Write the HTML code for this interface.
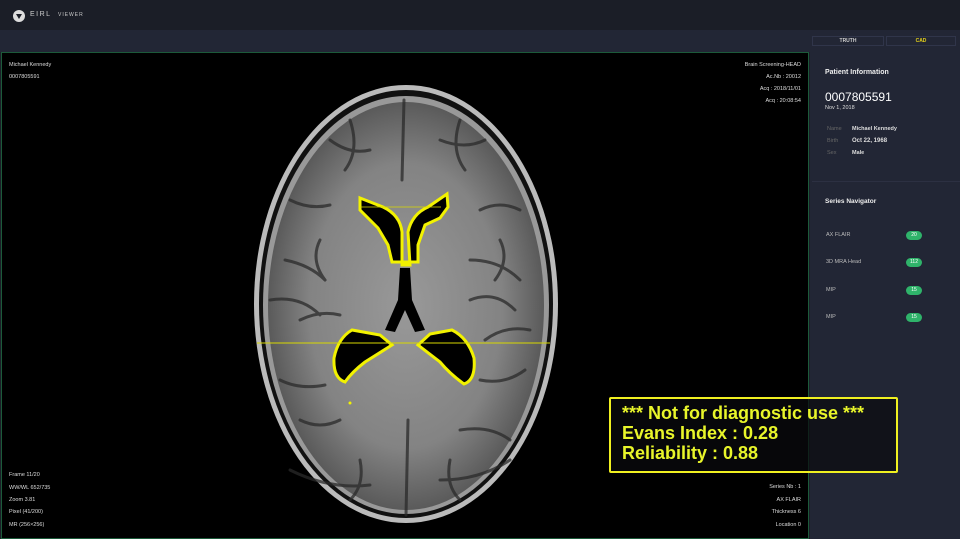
<!DOCTYPE html>
<html><head><meta charset="utf-8"><style>
*{margin:0;padding:0;box-sizing:border-box}
body{width:960px;height:539px;background:#1b1e27;font-family:"Liberation Sans",sans-serif;position:relative;overflow:hidden;color:#fff}
.top{position:absolute;left:0;top:0;width:960px;height:30px;background:#1b1e27}
.bar2{position:absolute;left:0;top:30px;width:960px;height:22px;background:#222635}
.view{position:absolute;left:1px;top:52px;width:808px;height:487px;background:#000;border:1.5px solid #1c5a3a}
.side{position:absolute;left:810px;top:52px;width:150px;height:487px;background:#222635}
.t{position:absolute;font-size:5.5px;color:#ddd;white-space:nowrap}
.r{text-align:right}
.tab{position:absolute;top:36px;height:10px;border:1px solid #30354a;font-size:5px;font-weight:bold;text-align:center;line-height:8px}
.badge{position:absolute;left:906px;width:16px;height:9px;border-radius:5px;background:#2fb36a;font-size:5px;text-align:center;line-height:9px;color:#fff}
.box{position:absolute;left:609px;top:397px;width:289px;height:76px;border:2px solid #f0f020;border-radius:2px;background:rgba(10,10,14,0.7);color:#e8f52a;font-weight:bold;font-size:18px;line-height:20px;padding:4px 0 0 11px}
</style></head><body>
<div class="top">
<svg style="position:absolute;left:12px;top:9px" width="14" height="14" viewBox="0 0 14 14"><circle cx="7" cy="7" r="6" fill="#ddd"/><path d="M4 5h6l-3 5z" fill="#1b1e27"/></svg>
<div class="t" style="left:30px;top:11px;font-size:7px;letter-spacing:1.5px;color:#ccc">EIRL</div>
<div class="t" style="left:58px;top:12px;font-size:5px;letter-spacing:1px;color:#ccc">VIEWER</div>
</div>
<div class="bar2"></div>
<div class="tab" style="left:812px;width:72px;color:#ccc">TRUTH</div>
<div class="tab" style="left:886px;width:70px;color:#e6d21a">CAD</div>
<div class="view"></div>
<div class="side"></div>
<svg style="position:absolute;left:0;top:0" width="960" height="539">
<defs>
<radialGradient id="g" cx="0.5" cy="0.5" r="0.5"><stop offset="0" stop-color="#999"/><stop offset="0.7" stop-color="#838383"/><stop offset="1" stop-color="#5a5a5a"/></radialGradient>
</defs>
<ellipse cx="406" cy="304" rx="152" ry="219" fill="#bbb"/>
<ellipse cx="406" cy="304" rx="147" ry="214" fill="#111"/>
<ellipse cx="406" cy="305" rx="143" ry="209" fill="#999"/>
<ellipse cx="406" cy="306" rx="138" ry="204" fill="url(#g)"/>
<g stroke="#2a2a2a" stroke-width="3" fill="none" opacity="0.75" stroke-linecap="round">
<path d="M404 100 L402 180"/><path d="M408 420 L406 515"/>
<path d="M290 200 q20 10 40 5 M285 260 q25 5 40 20 M300 320 q20 -10 40 -5 M480 210 q20 -10 40 0 M470 260 q30 0 50 20 M470 300 q25 -10 45 10 M300 420 q20 10 40 0 M460 430 q30 -5 50 10 M330 140 q20 15 40 10 M440 140 q25 10 45 0 M290 470 q40 20 80 15 M440 480 q40 0 70 -20"/>
<path d="M270 300 q30 -5 50 15 M530 330 q-25 -5 -45 10 M320 240 q-10 20 5 40 M500 240 q10 20 -5 40 M350 120 q10 30 -5 50 M460 120 q-10 30 5 50 M280 380 q20 10 45 5 M480 380 q25 5 45 -10 M360 460 q5 25 -10 40 M450 460 q-5 25 10 40"/>
</g>
<path d="M400 268 L410 268 L412 300 L425 330 L415 332 L405 310 L395 332 L385 330 L398 300 Z" fill="#000"/>
<path d="M360 198 L383 207 Q400 215 402 232 L402 265 L410 265 L408 232 Q412 214 428 207 L447 194 L448 207 L440 218 L425 225 L418 245 L418 262 L392 262 L388 245 L378 228 L360 210 Z" fill="#000" stroke="#f2f200" stroke-width="3"/>
<path d="M352 330 Q338 338 334 358 Q333 378 345 382 Q352 372 365 362 L392 345 L380 335 Z" fill="#000" stroke="#f2f200" stroke-width="3"/>
<path d="M452 330 Q468 338 474 358 Q476 380 464 384 Q450 374 440 362 L418 345 L430 334 Z" fill="#000" stroke="#f2f200" stroke-width="3"/>
<line x1="257" y1="343" x2="550" y2="343" stroke="#d8d800" stroke-width="1"/>
<line x1="360" y1="207" x2="441" y2="207" stroke="#d8d800" stroke-width="0.8"/>
<circle cx="350" cy="403" r="1.5" fill="#f2f200"/>
</svg>
<div class="t" style="left:9px;top:62px">Michael Kennedy</div>
<div class="t" style="left:9px;top:74px">0007805591</div>
<div class="t r" style="right:159px;top:62px">Brain Screening-HEAD</div>
<div class="t r" style="right:159px;top:74px">Ac.Nb : 20012</div>
<div class="t r" style="right:159px;top:86px">Acq : 2018/11/01</div>
<div class="t r" style="right:159px;top:98px">Acq : 20:08:54</div>
<div class="t" style="left:9px;top:472px">Frame 11/20</div>
<div class="t" style="left:9px;top:485px">WW/WL 652/735</div>
<div class="t" style="left:9px;top:497px">Zoom 3.81</div>
<div class="t" style="left:9px;top:509px">Pixel (41/200)</div>
<div class="t" style="left:9px;top:522px">MR (256×256)</div>
<div class="t r" style="right:159px;top:484px">Series Nb : 1</div>
<div class="t r" style="right:159px;top:497px">AX FLAIR</div>
<div class="t r" style="right:159px;top:509px">Thickness 6</div>
<div class="t r" style="right:159px;top:522px">Location 0</div>
<div class="box">*** Not for diagnostic use ***<br>Evans Index : 0.28<br>Reliability : 0.88</div>
<div class="t" style="left:825px;top:69px;font-size:7px;font-weight:bold;color:#eee">Patient Information</div>
<div class="t" style="left:825px;top:90px;font-size:12px;color:#fff">0007805591</div>
<div class="t" style="left:825px;top:105px;font-size:5.5px">Nov 1, 2018</div>
<div class="t" style="left:827px;top:126px;color:#666">Name</div><div class="t" style="left:852px;top:126px;font-weight:bold">Michael Kennedy</div>
<div class="t" style="left:827px;top:138px;color:#666">Birth</div><div class="t" style="left:852px;top:138px;font-weight:bold;font-size:6px">Oct 22, 1968</div>
<div class="t" style="left:827px;top:150px;color:#666">Sex</div><div class="t" style="left:852px;top:150px;font-weight:bold">Male</div>
<div style="position:absolute;left:812px;top:181px;width:148px;height:1px;background:#2c3042"></div>
<div class="t" style="left:825px;top:198px;font-size:6.5px;font-weight:bold;color:#eee">Series Navigator</div>
<div class="t" style="left:826px;top:232px;color:#bbb">AX FLAIR</div><div class="badge" style="top:231px">20</div>
<div class="t" style="left:826px;top:259px;color:#bbb">3D MRA Head</div><div class="badge" style="top:258px">112</div>
<div class="t" style="left:826px;top:287px;color:#bbb">MIP</div><div class="badge" style="top:286px">15</div>
<div class="t" style="left:826px;top:314px;color:#bbb">MIP</div><div class="badge" style="top:313px">15</div>
</body></html>
